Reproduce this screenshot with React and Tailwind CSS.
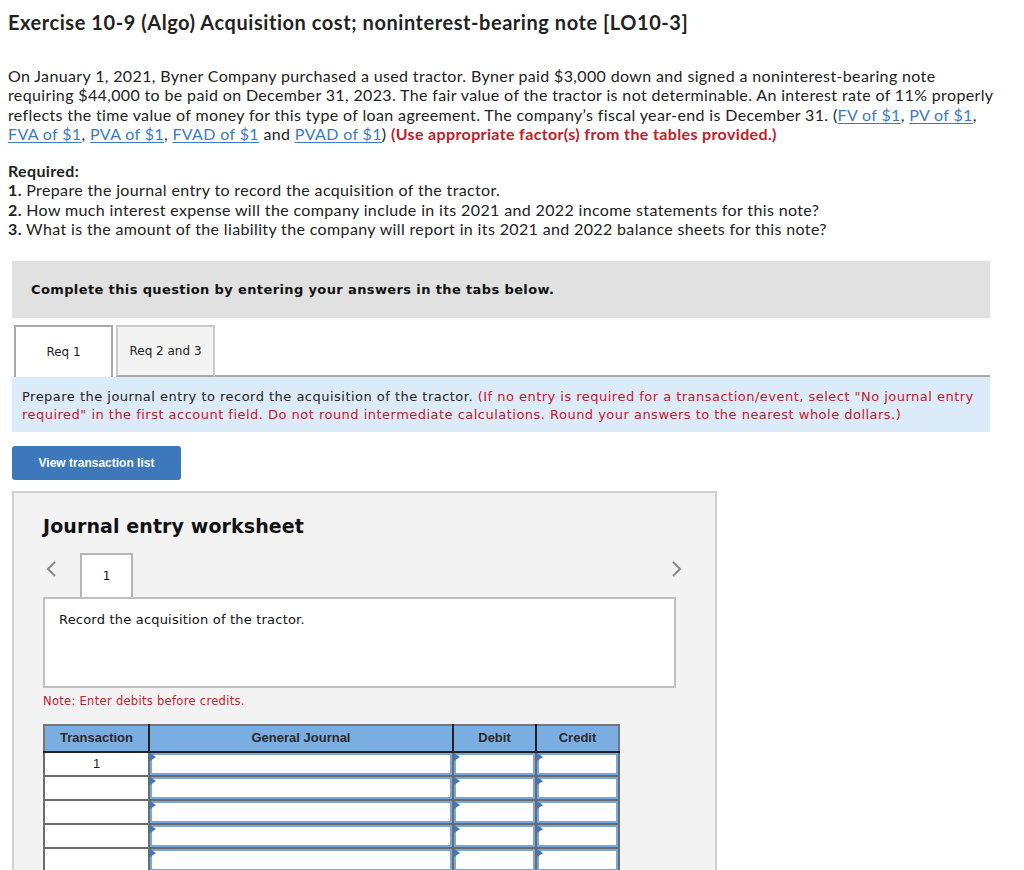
import React from "react";

const proxima = { fontFamily: "Lato, 'Open Sans', sans-serif" };

function Link({ children }) {
  return <span className="text-[#3a7bc8] underline decoration-1 underline-offset-2">{children}</span>;
}

function InputCell({ w }) {
  return (
    <td className={`border-2 border-[#6b6b6b] p-0 ${w}`}>
      <div className="relative h-[22px] border-2 border-[#77a7dc] bg-white">
        <span className="absolute left-[-2px] top-[-2px] h-0 w-0 border-y-[4px] border-l-[6px] border-y-transparent border-l-[#3a78c6]"></span>
      </div>
    </td>
  );
}

export default function App() {
  const rows = ["1", "", "", "", ""];
  return (
    <div className="h-[870px] w-[1024px] overflow-hidden bg-white text-[#222]">
      <div className="px-2 pt-[10px]" style={proxima}>
        <h1 className="text-[20px] font-bold leading-[24px] tracking-[0.55px] text-[#222]">
          Exercise 10-9 (Algo) Acquisition cost; noninterest-bearing note [LO10-3]
        </h1>
        <p className="mt-[32px] whitespace-nowrap text-[16px] leading-[19.3px] tracking-[0.36px] text-[#222]">
          On January 1, 2021, Byner Company purchased a used tractor. Byner paid $3,000 down and signed a noninterest-bearing note
          <br />
          requiring $44,000 to be paid on December 31, 2023. The fair value of the tractor is not determinable. An interest rate of 11% properly
          <br />
          reflects the time value of money for this type of loan agreement. The company’s fiscal year-end is December 31. (<Link>FV of $1</Link>, <Link>PV of $1</Link>,
          <br />
          <Link>FVA of $1</Link>, <Link>PVA of $1</Link>, <Link>FVAD of $1</Link> and <Link>PVAD of $1</Link>){" "}
          <span className="font-bold text-[#c0202a]">(Use appropriate factor(s) from the tables provided.)</span>
        </p>
        <div className="mt-[18px] whitespace-nowrap text-[16px] leading-[19.3px] tracking-[0.36px]">
          <div className="font-bold">Required:</div>
          <div><b>1.</b> Prepare the journal entry to record the acquisition of the tractor.</div>
          <div><b>2.</b> How much interest expense will the company include in its 2021 and 2022 income statements for this note?</div>
          <div><b>3.</b> What is the amount of the liability the company will report in its 2021 and 2022 balance sheets for this note?</div>
        </div>
      </div>

      <div className="ml-3 w-[978px]" style={{ fontFamily: "'DejaVu Sans', Verdana, sans-serif" }}>
        <div className="mt-[23px] flex h-[57px] items-center bg-[#e1e1e1] pl-[19px] text-[13px] font-bold tracking-[0.38px] text-[#111]">
          Complete this question by entering your answers in the tabs below.
        </div>

        <div className="mt-[7px] flex items-end pl-[2px]">
          <div className="flex h-[52px] w-[99px] items-center justify-center border-x-2 border-t-2 border-[#a9a9a9] bg-white text-[12px] text-[#222]">
            Req 1
          </div>
          <div className="ml-[3px] flex h-[52px] w-[99px] items-center justify-center border-x-2 border-t-2 border-b-2 border-[#c9c9c9] border-b-[#a9a9a9] bg-[#f3f3f3] text-[12px] text-[#222]">
            Req 2 and 3
          </div>
          <div className="h-[2px] flex-1 bg-[#a9a9a9]"></div>
        </div>

        <div className="whitespace-nowrap bg-[#dcebf8] px-[10px] pb-[9px] pt-[11px] text-[13px] leading-[17.5px] tracking-[0.48px] text-[#222]">
          Prepare the journal entry to record the acquisition of the tractor.{" "}
          <span className="text-[#c0202a]">
            (If no entry is required for a transaction/event, select "No journal entry
            <br />
            required" in the first account field. Do not round intermediate calculations. Round your answers to the nearest whole dollars.)
          </span>
        </div>

        <button
          className="mt-[14px] flex h-[34px] w-[169px] items-center justify-center rounded-[3px] bg-[#3d78bc] text-[12px] font-bold text-white"
          style={{ fontFamily: "'Liberation Sans', Arial, sans-serif" }}
        >
          View transaction list
        </button>

        <div className="mt-[11px] h-[400px] w-[705px] border-2 border-[#d0d0d0] bg-[#f3f3f3] px-[29px] pt-[20px]">
          <div className="text-[19px] font-bold leading-[26px] tracking-[0.1px] text-[#111]">Journal entry worksheet</div>

          <div className="relative mt-[14px] flex items-end">
            <span className="absolute left-[2px] top-[7px] text-[#8a8a8a]">
              <svg width="12" height="18" viewBox="0 0 12 18" fill="none" stroke="currentColor" strokeWidth="2">
                <path d="M10 2 L3 9 L10 16" />
              </svg>
            </span>
            <div className="ml-[37px] flex h-[44px] w-[53px] items-center justify-center border-x-2 border-t-2 border-[#b5b5b5] bg-white text-[12px] text-[#111]">
              1
            </div>
            <span className="absolute left-[628px] top-[7px] text-[#8a8a8a]">
              <svg width="12" height="18" viewBox="0 0 12 18" fill="none" stroke="currentColor" strokeWidth="2">
                <path d="M2 2 L9 9 L2 16" />
              </svg>
            </span>
          </div>
          <div className="h-[91px] w-[633px] border-2 border-[#c0c0c0] bg-white px-[14px] pt-[11px] text-[13px] tracking-[0.2px] text-[#111]">
            Record the acquisition of the tractor.
          </div>

          <div className="mt-[5px] text-[11.5px] tracking-[0.3px] text-[#c0202a]">Note: Enter debits before credits.</div>

          <table
            className="mt-[13px] border-collapse"
            style={{ fontFamily: "'Liberation Sans', Arial, sans-serif" }}
          >
            <thead>
              <tr className="h-[27px] bg-[#7aaee2] text-[13px] font-bold text-[#2a2a2a]">
                <th className="w-[105px] border-2 border-[#222] border-l-[#777] border-t-[#777]">Transaction</th>
                <th className="w-[304px] border-2 border-[#222] border-t-[#777]">General Journal</th>
                <th className="w-[83px] border-2 border-[#222] border-t-[#777]">Debit</th>
                <th className="w-[83px] border-2 border-[#222] border-t-[#777] border-r-[#777]">Credit</th>
              </tr>
            </thead>
            <tbody>
              {rows.map((r, i) => (
                <tr key={i} className="h-[24px]">
                  <td className="border-2 border-[#6b6b6b] bg-white text-center text-[13px] text-[#222]">{r}</td>
                  <InputCell w="w-[304px]" />
                  <InputCell w="w-[83px]" />
                  <InputCell w="w-[83px]" />
                </tr>
              ))}
            </tbody>
          </table>
        </div>
      </div>
    </div>
  );
}
